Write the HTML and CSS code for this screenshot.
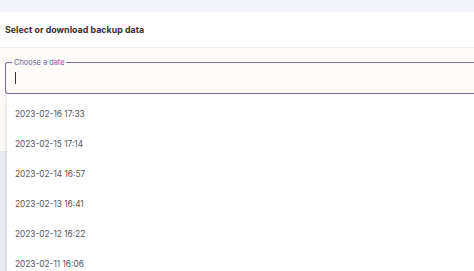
FILE: index.html
```html
<!DOCTYPE html>
<html>
<head>
<meta charset="utf-8">
<link rel="stylesheet" href="styles.css">
</head>
<body>
<div class="topbar"></div>
<div class="header"><h1 class="title">Select or download backup data</h1></div>
<div class="content">
  <fieldset class="field">
    <legend class="label">Choose a date</legend>
    <span class="caret"></span>
  </fieldset>
  <div class="under">
    <div class="under-row"></div>
    <div class="under-side"></div>
  </div>
  <ul class="menu">
    <li class="item">2023-02-16 17:33</li>
    <li class="item">2023-02-15 17:14</li>
    <li class="item">2023-02-14 16:57</li>
    <li class="item">2023-02-13 16:41</li>
    <li class="item">2023-02-12 16:22</li>
    <li class="item">2023-02-11 16:06</li>
  </ul>
</div>
</body>
</html>
```
FILE: styles.css
```css
html, body {
  margin: 0;
  padding: 0;
  height: 100%;
  overflow: hidden;
}
body {
  font-family: Inter, "Noto Sans", sans-serif;
  background: #fdfcf9;
  color: #333;
}
.topbar {
  height: 12px;
  background: #f3f3fb;
}
.header {
  height: 35px;
  background: #ffffff;
  border-bottom: 1px solid #ebeae4;
  display: flex;
  align-items: center;
  padding-left: 5px;
}
.title {
  margin: 0;
  font-size: 8.8px;
  font-weight: 700;
  color: #2f2f33;
  letter-spacing: 0.05px;
}
.content {
  position: relative;
  padding-top: 10px;
  height: 224px;
  overflow: hidden;
}
.field {
  margin: 0 0 0 5px;
  padding: 0 0 0 6px;
  height: 36px;
  box-sizing: border-box;
  border: 1.5px solid #7a6f9f;
  border-right: none;
  border-radius: 3px 0 0 3px;
  display: flex;
  align-items: center;
}
.label {
  font-size: 7.4px;
  color: #6a5c9c;
  padding: 0 2px;
  margin-left: 0;
  line-height: 9px;
}
.caret {
  display: block;
  width: 1px;
  height: 12px;
  background: #333;
  margin-top: -4px;
  margin-left: 3px;
}
.under {
  height: 180px;
  display: flex;
  flex-direction: column;
}
.under-row {
  height: 57px;
}
.under-side {
  flex: 1;
  width: 8px;
  background: #ebebf4;
}
.menu {
  position: absolute;
  top: 46px;
  left: 7px;
  right: -10px;
  margin: 0;
  padding: 5px 0 0 0;
  list-style: none;
  background: #ffffff;
  box-shadow: -1px 2px 4px rgba(0, 0, 0, 0.12);
  height: 190px;
}
.item {
  height: 30px;
  line-height: 30px;
  padding-left: 8px;
  font-size: 8.3px;
  color: #555458;
}
```
